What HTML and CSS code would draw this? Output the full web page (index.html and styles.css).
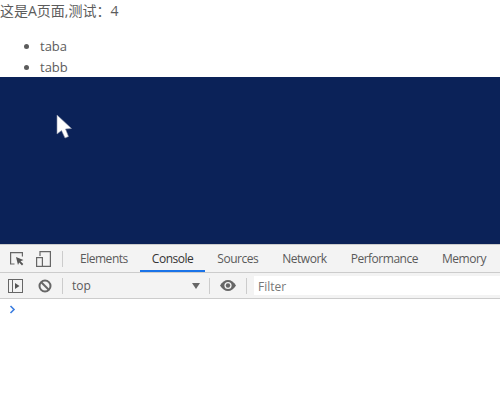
FILE: index.html
```html
<!DOCTYPE html>
<html lang="en">
<head>
  <meta charset="UTF-8">
  <title>Page A</title>
  <link rel="stylesheet" href="styles.css">
</head>
<body>
  <div class="page">
    <p class="title">这是A页面,测试：4</p>
    <ul class="tabs-list">
      <li>taba</li>
      <li>tabb</li>
    </ul>
  </div>

  <div class="banner">
    <svg class="cursor" width="18" height="27" viewBox="0 0 18 27">
      <path d="M1 1 L1 20 L5.500 16.500 L9 24 L12.500 22.500 L9.500 15 L15.500 14.500 Z" fill="#fff" stroke="#8d94a8" stroke-width="0.600"/>
    </svg>
  </div>

  <div class="devtools">
    <div class="tabbar">
      <svg class="icon icon-inspect" width="14" height="14" viewBox="0 0 14 14">
        <path d="M4.500 12H.6V.6h11.800v4" fill="none" stroke="#666" stroke-width="1.200"/>
        <path d="M6 5l7.500 3-3 1.300 2.800 2.800-1.300 1.300-2.800-2.800L8 13z" fill="#555"/>
      </svg>
      <svg class="icon icon-device" width="15" height="16" viewBox="0 0 15 16">
        <path d="M4 5V.6h10.400v14.800H6.500" fill="none" stroke="#666" stroke-width="1.200"/>
        <rect x="0.600" y="6.600" width="5.800" height="8.800" fill="none" stroke="#666" stroke-width="1.200"/>
      </svg>
      <span class="sep sep-tabs"></span>
      <a class="tab">Elements</a>
      <a class="tab active">Console</a>
      <a class="tab">Sources</a>
      <a class="tab">Network</a>
      <a class="tab">Performance</a>
      <a class="tab">Memory</a>
    </div>
    <div class="toolbar">
      <svg class="icon icon-sidebar" width="15" height="14" viewBox="0 0 15 14">
        <rect x="0.500" y="0.500" width="14" height="13" fill="none" stroke="#666"/>
        <path d="M4.500 0v14" stroke="#666"/>
        <path d="M7 4l4.500 3L7 10z" fill="#555"/>
      </svg>
      <svg class="icon icon-clear" width="14" height="14" viewBox="0 0 14 14">
        <circle cx="7" cy="7" r="5.500" fill="none" stroke="#666" stroke-width="2"/>
        <path d="M3 3l8 8" stroke="#666" stroke-width="2"/>
      </svg>
      <span class="sep"></span>
      <div class="context">
        <span>top</span>
        <span class="arrow"></span>
      </div>
      <span class="sep"></span>
      <svg class="icon icon-eye" width="16" height="11" viewBox="0 0 16 11">
        <path d="M0 5.500C2 2 5 0 8 0s6 2 8 5.500C14 9 11 11 8 11S2 9 0 5.500z" fill="#666"/>
        <circle cx="8" cy="5.500" r="3.600" fill="#f3f3f3"/>
        <circle cx="8" cy="5.500" r="2.200" fill="#666"/>
      </svg>
      <span class="sep"></span>
      <div class="filter">Filter</div>
    </div>
    <div class="console">
      <svg width="7" height="9" viewBox="0 0 7 9">
        <path d="M1.500 1l3.500 3.500L1.500 8" fill="none" stroke="#3b7de0" stroke-width="1.600"/>
      </svg>
    </div>
  </div>
</body>
</html>
```

FILE: styles.css
```css
html, body { margin: 0; padding: 0; }
body { width: 500px; height: 400px; overflow: hidden; background: #fff; font-family: "Open Sans", "Noto Sans CJK SC", sans-serif; }

.page { height: 77px; color: #5c5c5c; font-size: 13px; overflow: hidden; }
.title { margin: 0; height: 22px; line-height: 22px; font-size: 14px; }
.tabs-list { margin: 14px 0 0; padding: 0 0 0 40px; }
.tabs-list li { height: 21px; line-height: 20px; }

.banner { position: relative; height: 167px; background: #0b2258; }
.cursor { position: absolute; left: 56px; top: 37px; }

.devtools { font-family: "Open Sans", sans-serif; font-size: 12px; color: #5a5a5a; }
.icon { flex: none; }

.tabbar { display: flex; align-items: center; height: 27px; padding-left: 10px; background: #f3f3f3; border-top: 1px solid #ccc; border-bottom: 1px solid #ccc; white-space: nowrap; overflow: hidden; }
.icon-inspect { margin-right: 12px; }
.icon-device { margin-right: 11px; }
.sep { flex: none; width: 1px; height: 16px; background: #ccc; }
.sep-tabs { margin-right: 5px; }
.tab { display: flex; align-items: center; height: 27px; padding: 0 12px; box-sizing: border-box; letter-spacing: -0.480px; }
.tab.active { color: #333; border-bottom: 2px solid #1a73e8; padding-top: 2px; }

.toolbar { display: flex; align-items: center; height: 25px; padding-left: 8px; background: #f3f3f3; border-bottom: 1px solid #ccc; }
.icon-sidebar { margin-right: 15px; }
.icon-clear { margin-right: 10px; }
.context { display: flex; align-items: center; justify-content: space-between; width: 146px; padding: 0 9px 0 9px; box-sizing: border-box; }
.arrow { width: 0; height: 0; border-left: 4px solid transparent; border-right: 4px solid transparent; border-top: 6px solid #666; }
.icon-eye { margin: 0 10px; }
.filter { flex: 1; height: 19px; margin-left: 7px; padding-left: 4px; line-height: 21px; background: #fff; color: #777; }

.console { height: 101px; padding: 6px 0 0 9px; background: #fff; }
.console svg { display: block; }
```
